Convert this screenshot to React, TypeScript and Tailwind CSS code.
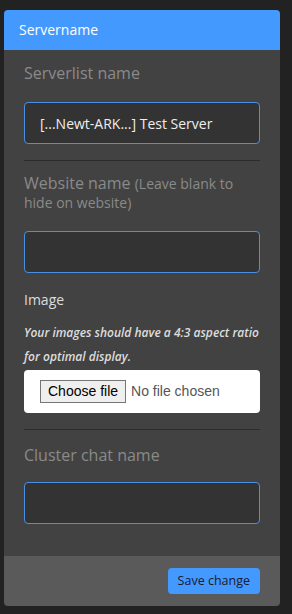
import React from 'react';

const Field = ({ value }: { value?: string }) => (
  <input
    className="block h-[42px] w-full rounded-[4px] border border-[#4a90e2] bg-[#333333] px-[15px] text-[14px] text-[#eeeeee] outline-none"
    defaultValue={value}
    readOnly
  />
);

const App = () => {
  return (
    <div
      className="min-h-screen bg-[#222222] px-[4px] pt-[10px]"
      style={{ fontFamily: '"Open Sans", "Noto Sans", sans-serif' }}
    >
      <div className="w-[276px] overflow-hidden rounded-[4px]">
        <div className="h-[40px] bg-[#4499ff] px-[15px] text-[14px] leading-[40px] text-white">
          Servername
        </div>

        <div className="bg-[#424242] px-[20px] pt-[11px] pb-[32px]">
          <p className="text-[16px] leading-[24px] text-[#8a8a8a]">Serverlist name</p>
          <div className="mt-[17px]">
            <Field value="[...Newt-ARK...] Test Server" />
          </div>

          <hr className="mt-[16px] border-t border-[#2c2c2c]" />

          <p className="mt-[13px] text-[16px] leading-[18px] text-[#8a8a8a]">
            Website name{' '}
            <span className="text-[14px] leading-[18px]">(Leave blank to hide on website)</span>
          </p>
          <div className="mt-[19px]">
            <Field />
          </div>

          <p className="mt-[17px] text-[14px] leading-[20px] text-[#dddddd]">Image</p>
          <p className="mt-[11px] text-[12px] font-semibold italic leading-[24px] text-[#dddddd]">
            Your images should have a 4:3 aspect ratio for optimal display.
          </p>
          <div className="mt-[1px] flex h-[43px] items-center rounded-[4px] bg-white px-[16px]">
            <span
              className="flex h-[23px] items-center border border-[#767676] bg-[#efefef] px-[7px] text-[14px] text-black"
              style={{ fontFamily: '"Liberation Sans", Arial, sans-serif' }}
            >
              Choose file
            </span>
            <span
              className="ml-[5px] text-[14px] text-[#555555]"
              style={{ fontFamily: '"Liberation Sans", Arial, sans-serif' }}
            >
              No file chosen
            </span>
          </div>

          <hr className="mt-[16px] border-t border-[#2c2c2c]" />

          <p className="mt-[13px] text-[16px] leading-[24px] text-[#8a8a8a]">Cluster chat name</p>
          <div className="mt-[15px]">
            <Field />
          </div>
        </div>

        <div className="flex h-[50px] items-center justify-end bg-[#5a5a5a] px-[20px]">
          <button className="h-[26px] rounded-[4px] bg-[#4499ff] px-[10px] text-[12.5px] text-[#1a1a30]">
            Save change
          </button>
        </div>
      </div>
    </div>
  );
};

export default App;
